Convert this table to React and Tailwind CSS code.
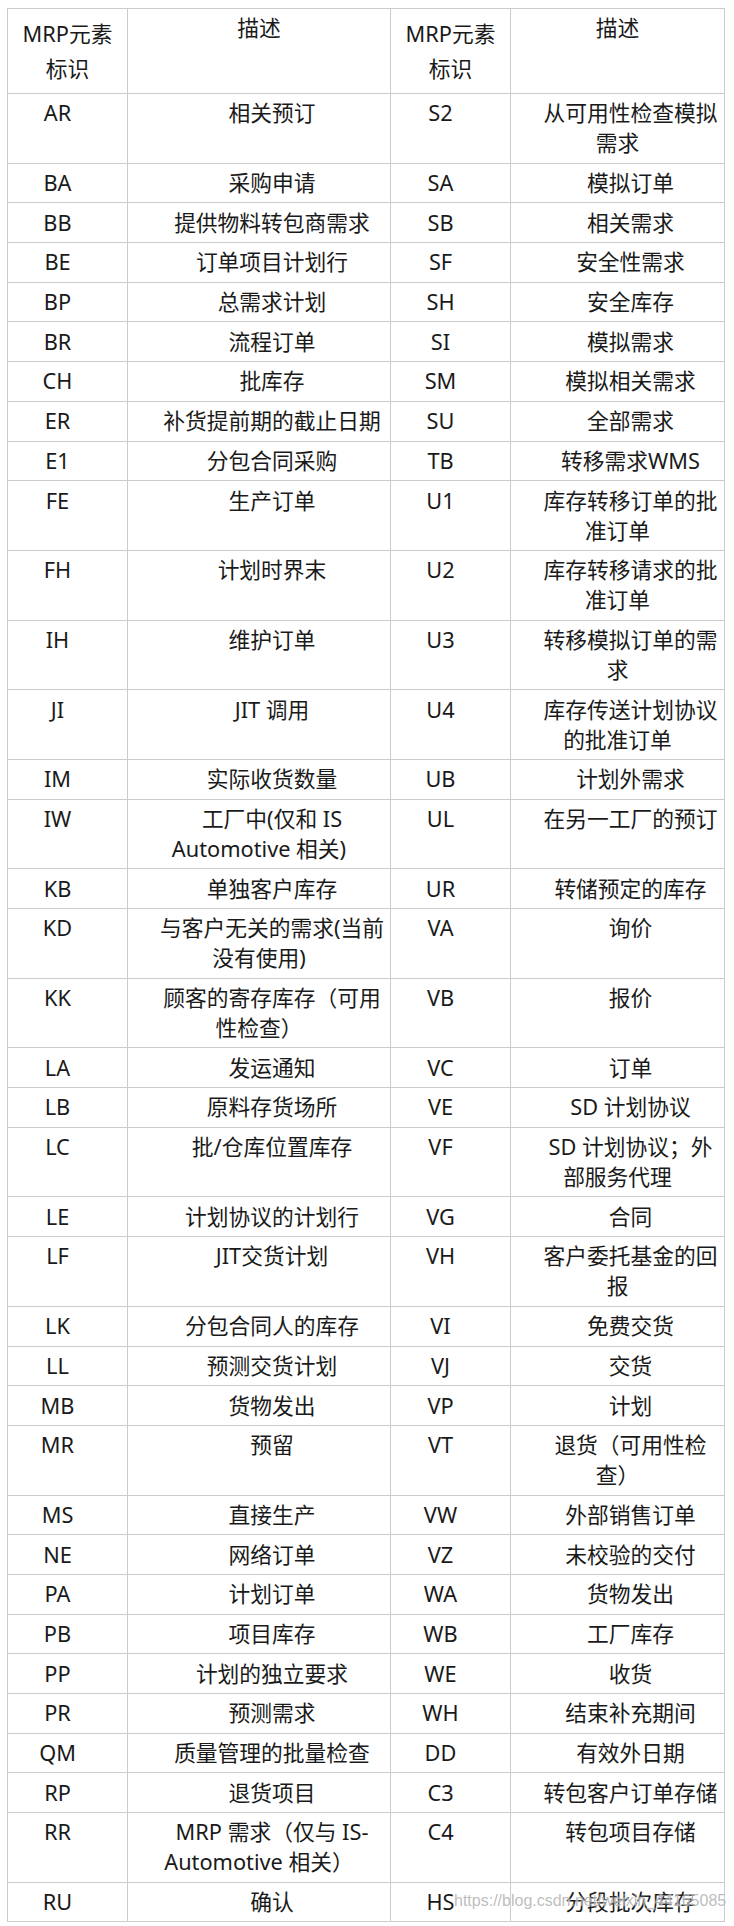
const rows = [
  ["AR", ["相关预订"], "S2", ["从可用性检查模拟", "需求"]],
  ["BA", ["采购申请"], "SA", ["模拟订单"]],
  ["BB", ["提供物料转包商需求"], "SB", ["相关需求"]],
  ["BE", ["订单项目计划行"], "SF", ["安全性需求"]],
  ["BP", ["总需求计划"], "SH", ["安全库存"]],
  ["BR", ["流程订单"], "SI", ["模拟需求"]],
  ["CH", ["批库存"], "SM", ["模拟相关需求"]],
  ["ER", ["补货提前期的截止日期"], "SU", ["全部需求"]],
  ["E1", ["分包合同采购"], "TB", ["转移需求WMS"]],
  ["FE", ["生产订单"], "U1", ["库存转移订单的批", "准订单"]],
  ["FH", ["计划时界末"], "U2", ["库存转移请求的批", "准订单"]],
  ["IH", ["维护订单"], "U3", ["转移模拟订单的需", "求"]],
  ["JI", ["JIT 调用"], "U4", ["库存传送计划协议", "的批准订单"]],
  ["IM", ["实际收货数量"], "UB", ["计划外需求"]],
  ["IW", ["工厂中(仅和 IS", "Automotive 相关)"], "UL", ["在另一工厂的预订"]],
  ["KB", ["单独客户库存"], "UR", ["转储预定的库存"]],
  ["KD", ["与客户无关的需求(当前", "没有使用)"], "VA", ["询价"]],
  ["KK", ["顾客的寄存库存（可用", "性检查）"], "VB", ["报价"]],
  ["LA", ["发运通知"], "VC", ["订单"]],
  ["LB", ["原料存货场所"], "VE", ["SD 计划协议"]],
  ["LC", ["批/仓库位置库存"], "VF", ["SD 计划协议；外", "部服务代理"]],
  ["LE", ["计划协议的计划行"], "VG", ["合同"]],
  ["LF", ["JIT交货计划"], "VH", ["客户委托基金的回", "报"]],
  ["LK", ["分包合同人的库存"], "VI", ["免费交货"]],
  ["LL", ["预测交货计划"], "VJ", ["交货"]],
  ["MB", ["货物发出"], "VP", ["计划"]],
  ["MR", ["预留"], "VT", ["退货（可用性检", "查）"]],
  ["MS", ["直接生产"], "VW", ["外部销售订单"]],
  ["NE", ["网络订单"], "VZ", ["未校验的交付"]],
  ["PA", ["计划订单"], "WA", ["货物发出"]],
  ["PB", ["项目库存"], "WB", ["工厂库存"]],
  ["PP", ["计划的独立要求"], "WE", ["收货"]],
  ["PR", ["预测需求"], "WH", ["结束补充期间"]],
  ["QM", ["质量管理的批量检查"], "DD", ["有效外日期"]],
  ["RP", ["退货项目"], "C3", ["转包客户订单存储"]],
  ["RR", ["MRP 需求（仅与 IS-", "Automotive 相关）"], "C4", ["转包项目存储"]],
  ["RU", ["确认"], "HS", ["分段批次库存"]],
];

function CodeCell({ code }) {
  return (
    <td className="border border-[#cccccc] align-top text-center pl-[5px] pr-[25px] py-[4.35px]">
      {code}
    </td>
  );
}

function DescCell({ lines }) {
  return (
    <td className="border border-[#cccccc] align-top text-center whitespace-nowrap px-[6px] py-[4.35px] indent-[26px]">
      {lines.map((line, i) => (
        <span key={i}>
          {i > 0 && <br />}
          {line}
        </span>
      ))}
    </td>
  );
}

export default function App() {
  return (
    <div className="relative bg-white w-[734px] h-[1926px] pt-[8px] pl-[7px] text-[#1a1a1a] text-[21.75px] leading-[30px] font-['Noto_Sans','Noto_Sans_CJK_SC',sans-serif]">
      <table className="w-[717px] table-fixed border-collapse border border-[#cccccc]">
        <colgroup>
          <col className="w-[120px]" />
          <col className="w-[263px]" />
          <col className="w-[120px]" />
          <col className="w-[214px]" />
        </colgroup>
        <thead>
          <tr className="leading-[35px]">
            <th className="border border-[#cccccc] align-top text-center font-normal px-[5px] py-[7px]">
              MRP元素<br />标识
            </th>
            <th className="border border-[#cccccc] align-top text-center font-normal px-[5px] pt-[1px] pb-[7px]">
              描述
            </th>
            <th className="border border-[#cccccc] align-top text-center font-normal px-[5px] py-[7px]">
              MRP元素<br />标识
            </th>
            <th className="border border-[#cccccc] align-top text-center font-normal px-[5px] pt-[1px] pb-[7px]">
              描述
            </th>
          </tr>
        </thead>
        <tbody>
          {rows.map((r) => (
            <tr key={r[0]}>
              <CodeCell code={r[0]} />
              <DescCell lines={r[1]} />
              <CodeCell code={r[2]} />
              <DescCell lines={r[3]} />
            </tr>
          ))}
        </tbody>
      </table>

      {/* watermark */}
      <div className="absolute left-[454px] top-[1891px] whitespace-nowrap text-[16px] leading-[20px] text-[#a0a0a0]/70 font-['Liberation_Sans',Arial,sans-serif] [text-shadow:0_0_2px_#ffffff]">
        https://blog.csdn.net/weixin_44165085
      </div>
    </div>
  );
}
